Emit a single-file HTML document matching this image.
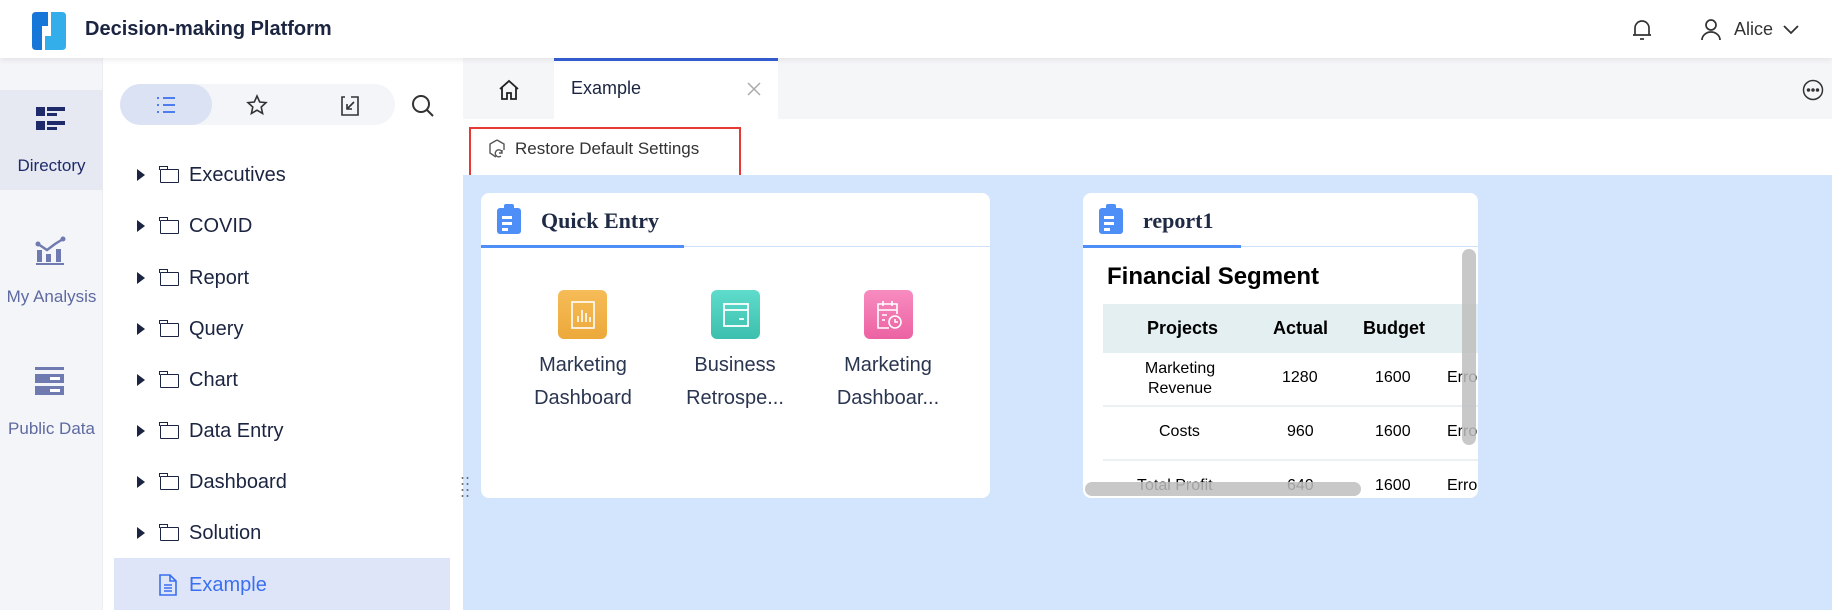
<!DOCTYPE html>
<html><head><meta charset="utf-8"><style>
*{box-sizing:border-box;margin:0;padding:0}
body{width:1832px;height:610px;overflow:hidden;font-family:"Liberation Sans",sans-serif;background:#fff;position:relative;color:#1f2a44}
.a{position:absolute}
.hdr{left:0;top:0;width:1832px;height:58px;background:#fff;box-shadow:0 2px 6px rgba(0,0,0,.08);z-index:5}
.rail{left:0;top:58px;width:103px;height:552px;background:#f4f5f9;border-right:1px solid #eceef3}
.rl{width:103px;text-align:center;font-size:17px;color:#5e6aa0}
.side{left:103px;top:58px;width:360px;height:552px;background:#fff}
.ti{left:137px;font-size:20px;color:#1b2440;height:30px;line-height:30px}
.ti .tri{position:absolute;left:0;top:9px;width:0;height:0;border-left:8px solid #1b2440;border-top:6px solid transparent;border-bottom:6px solid transparent}
.ti .fold{position:absolute;left:23px;top:9px;width:19px;height:14px;border:1.6px solid #1b2440;border-radius:1px}
.ti .fold:before{content:"";position:absolute;left:-1.6px;top:-4px;width:7px;height:3px;border:1.6px solid #1b2440;border-bottom:none}
.ti span{position:absolute;left:52px;white-space:nowrap}
.main{left:463px;top:175px;width:1369px;height:435px;background:#d3e5fc}
.card{background:#fff;border-radius:8px;overflow:hidden}
.ch{font-family:"Liberation Serif",serif;font-weight:bold;font-size:22px;color:#1f2a44}
.ic{width:49px;height:49px;border-radius:6px}
.lb{width:130px;text-align:center;font-size:20px;line-height:33px;color:#2a3550}
</style></head><body>
<div class="a hdr">
 <svg class="a" style="left:28px;top:10px" width="42" height="42" viewBox="0 0 42 42"><path d="M4 6 Q4 2 8 2 L20 2 L20 16 L14 16 L14 40 L8 40 Q4 40 4 36Z" fill="#1677d9"/><path d="M23 2 L34 2 Q38 2 38 6 L38 36 Q38 40 34 40 L17 40 L17 26 L23 26Z" fill="#33aeea"/></svg>
 <div class="a" style="left:85px;top:18px;font-size:20px;font-weight:bold;color:#1b2440">Decision-making Platform</div>
 <svg class="a" style="left:1631px;top:18px" width="22" height="24" viewBox="0 0 22 24" fill="none" stroke="#333" stroke-width="1.7"><path d="M4 17 V10 A7 7 0 0 1 18 10 V17 H2 H20"/><path d="M9 21 H13"/></svg>
 <svg class="a" style="left:1700px;top:18px" width="22" height="24" viewBox="0 0 22 24" fill="none" stroke="#333" stroke-width="1.7"><circle cx="11" cy="7" r="5"/><path d="M2 22 A9 8 0 0 1 20 22"/></svg>
 <div class="a" style="left:1734px;top:19px;font-size:18px;color:#333">Alice</div>
 <svg class="a" style="left:1782px;top:24px" width="18" height="12" viewBox="0 0 18 12" fill="none" stroke="#333" stroke-width="1.8"><path d="M2 2 L9 9 L16 2"/></svg>
</div>
<div class="a rail">
 <div class="a" style="left:0;top:32px;width:103px;height:100px;background:#e6e9f2"></div>
 <svg class="a" style="left:35px;top:47px" width="32" height="28" viewBox="0 0 32 28"><rect x="1" y="2" width="9" height="9" fill="#1f2a6a"/><rect x="12" y="2" width="18" height="4" fill="#1f2a6a"/><rect x="12" y="8" width="10" height="3" fill="#1f2a6a"/><rect x="1" y="16" width="9" height="9" fill="#1f2a6a"/><rect x="12" y="16" width="18" height="4" fill="#1f2a6a"/><rect x="12" y="22" width="10" height="3" fill="#1f2a6a"/></svg>
 <div class="a rl" style="top:98px;color:#1f2a6a">Directory</div>
 <svg class="a" style="left:35px;top:178px" width="32" height="30" viewBox="0 0 32 30"><path d="M3 8 L12 14 L20 8 L28 3" stroke="#6f7bb0" stroke-width="2.5" fill="none"/><circle cx="3" cy="8" r="2.5" fill="#6f7bb0"/><circle cx="28" cy="3" r="2.5" fill="#6f7bb0"/><rect x="2" y="14" width="5" height="12" fill="#6f7bb0"/><rect x="11" y="18" width="5" height="8" fill="#6f7bb0"/><rect x="21" y="13" width="5" height="13" fill="#6f7bb0"/><rect x="1" y="27" width="28" height="2" fill="#6f7bb0"/></svg>
 <div class="a rl" style="top:229px">My Analysis</div>
 <svg class="a" style="left:35px;top:309px" width="30" height="30" viewBox="0 0 30 30"><rect x="0" y="0" width="29" height="3" fill="#6f7bb0"/><rect x="0" y="7" width="29" height="9" fill="#6f7bb0"/><rect x="0" y="19" width="29" height="9" fill="#6f7bb0"/><rect x="15" y="10" width="10" height="3" fill="#fff"/><rect x="15" y="22" width="10" height="3" fill="#fff"/></svg>
 <div class="a rl" style="top:361px">Public Data</div>
</div>
<div class="a side">
 <div class="a" style="left:17px;top:26px;width:275px;height:41px;border-radius:21px;background:#f3f5f9"></div>
 <div class="a" style="left:17px;top:26px;width:92px;height:41px;border-radius:21px;background:#dbe2f4"></div>
 <svg class="a" style="left:53px;top:38px" width="20" height="18" viewBox="0 0 20 18" stroke="#3a6ff0" stroke-width="1.8"><path d="M1 2h2M7 2h12M1 9h2M7 9h12M1 16h2M7 16h12"/></svg>
 <svg class="a" style="left:143px;top:36px" width="22" height="22" viewBox="0 0 22 22" fill="none" stroke="#333" stroke-width="1.6"><path d="M11 2 L13.7 8 L20 8.6 L15.2 13 L16.6 19.5 L11 16.2 L5.4 19.5 L6.8 13 L2 8.6 L8.3 8Z"/></svg>
 <svg class="a" style="left:236px;top:37px" width="22" height="22" viewBox="0 0 22 22" fill="none" stroke="#333" stroke-width="1.6"><path d="M12 2 H19 V20 H3 V2 H6"/><path d="M15 7 L8 14 M8 9 V14 H13"/></svg>
 <svg class="a" style="left:308px;top:36px" width="24" height="24" viewBox="0 0 24 24" fill="none" stroke="#333" stroke-width="2"><circle cx="10" cy="10" r="8"/><path d="M16 16 L22 22"/></svg>
</div>
<div class="a ti" style="top:160px"><i class="tri"></i><i class="fold"></i><span>Executives</span></div>
<div class="a ti" style="top:211px"><i class="tri"></i><i class="fold"></i><span>COVID</span></div>
<div class="a ti" style="top:263px"><i class="tri"></i><i class="fold"></i><span>Report</span></div>
<div class="a ti" style="top:314px"><i class="tri"></i><i class="fold"></i><span>Query</span></div>
<div class="a ti" style="top:365px"><i class="tri"></i><i class="fold"></i><span>Chart</span></div>
<div class="a ti" style="top:416px"><i class="tri"></i><i class="fold"></i><span>Data Entry</span></div>
<div class="a ti" style="top:467px"><i class="tri"></i><i class="fold"></i><span>Dashboard</span></div>
<div class="a ti" style="top:518px"><i class="tri"></i><i class="fold"></i><span>Solution</span></div>
<div class="a" style="left:114px;top:558px;width:336px;height:52px;background:#dfe5f8"></div>
<svg class="a" style="left:159px;top:574px" width="18" height="22" viewBox="0 0 18 22" fill="none" stroke="#3a6ff0" stroke-width="1.6"><path d="M1 1 H11 L17 7 V21 H1Z M11 1 V7 H17 M5 11 H13 M5 14 H13 M5 17 H13"/></svg>
<div class="a" style="left:189px;top:570px;font-size:20px;color:#3a6ff0;line-height:30px">Example</div>
<div class="a" style="left:463px;top:58px;width:1369px;height:61px;background:#f5f6f8"></div>
<svg class="a" style="left:498px;top:79px" width="22" height="22" viewBox="0 0 22 22" fill="none" stroke="#222" stroke-width="1.8"><path d="M2 10 L11 2 L20 10 M4 8 V20 H9 V14 H13 V20 H18 V8"/></svg>
<div class="a" style="left:554px;top:58px;width:224px;height:61px;background:#fff;border-top:3px solid #3560d8"></div>
<div class="a" style="left:571px;top:78px;font-size:18px;color:#1b2440">Example</div>
<svg class="a" style="left:746px;top:81px" width="16" height="16" viewBox="0 0 16 16" stroke="#aaa" stroke-width="1.5"><path d="M2 2 L14 14 M14 2 L2 14"/></svg>
<svg class="a" style="left:1802px;top:79px" width="22" height="22" viewBox="0 0 22 22" fill="none" stroke="#333" stroke-width="1.5"><circle cx="11" cy="11" r="9.5"/><circle cx="6.5" cy="11" r="1" fill="#333"/><circle cx="11" cy="11" r="1" fill="#333"/><circle cx="15.5" cy="11" r="1" fill="#333"/></svg>
<div class="a" style="left:463px;top:119px;width:1369px;height:56px;background:#fff"></div>
<div class="a" style="left:469px;top:127px;width:272px;height:51px;border:2px solid #e53935"></div>
<svg class="a" style="left:488px;top:139px" width="18" height="20" viewBox="0 0 18 20" fill="none" stroke="#555" stroke-width="1.4"><path d="M9 1 L16 5 V11 M9 1 L2 5 V14 L8 18"/><path d="M14 13 A3.5 3.5 0 1 0 13 17 M14 11 V14 H11"/></svg>
<div class="a" style="left:515px;top:139px;font-size:17px;color:#333">Restore Default Settings</div>
<div class="a main"></div>
<svg class="a" style="left:461px;top:476px" width="8" height="22" viewBox="0 0 8 22" fill="#666"><circle cx="1.5" cy="2" r="1"/><circle cx="6.5" cy="2" r="1"/><circle cx="1.5" cy="8" r="1"/><circle cx="6.5" cy="8" r="1"/><circle cx="1.5" cy="14" r="1"/><circle cx="6.5" cy="14" r="1"/><circle cx="1.5" cy="20" r="1"/><circle cx="6.5" cy="20" r="1"/></svg>
<div class="a card" style="left:481px;top:193px;width:509px;height:305px">
 <svg class="a" style="left:16px;top:11px" width="24" height="30" viewBox="0 0 24 30"><rect x="0" y="4" width="24" height="26" rx="3" fill="#4e8ef7"/><rect x="7" y="0" width="10" height="7" rx="2" fill="#4e8ef7"/><rect x="5" y="12" width="10" height="3" fill="#fff"/><rect x="5" y="18" width="10" height="3" fill="#fff"/><rect x="5" y="24" width="6" height="3" fill="#fff"/></svg>
 <div class="a ch" style="left:60px;top:15px">Quick Entry</div>
 <div class="a" style="left:0;top:53px;width:509px;height:1px;background:#cfe0fa"></div>
 <div class="a" style="left:0;top:52px;width:203px;height:3px;background:#4e8ef7"></div>
 <div class="a ic" style="left:77px;top:97px;background:linear-gradient(#f6bc58,#eca93a)"></div>
 <svg class="a" style="left:89px;top:107px" width="26" height="30" viewBox="0 0 26 30" fill="none" stroke="#fff" stroke-width="1.6"><rect x="2" y="2" width="22" height="26"/><path d="M8 22 V16 M12 22 V10 M16 22 V13 M20 22 V17"/></svg>
 <div class="a ic" style="left:230px;top:97px;background:linear-gradient(#5fdccb,#3cbfae)"></div>
 <svg class="a" style="left:241px;top:109px" width="28" height="26" viewBox="0 0 28 26" fill="none" stroke="#fff" stroke-width="1.8"><rect x="2" y="2" width="24" height="22"/><path d="M2 8 H26 M17 17 H22"/></svg>
 <div class="a ic" style="left:383px;top:97px;background:linear-gradient(#f78cc0,#ec62a2)"></div>
 <svg class="a" style="left:394px;top:105px" width="28" height="34" viewBox="0 0 28 34" fill="none" stroke="#fff" stroke-width="1.6"><path d="M14 30 H3 V6 H22 V16 M3 12 H22 M8 3 V8 M17 3 V8 M7 17 H12 M7 22 H10"/><circle cx="20" cy="24" r="6"/><path d="M20 21 V24 H23"/></svg>
 <div class="a lb" style="left:37px;top:156px">Marketing<br>Dashboard</div>
 <div class="a lb" style="left:189px;top:156px">Business<br>Retrospe...</div>
 <div class="a lb" style="left:342px;top:156px">Marketing<br>Dashboar...</div>
</div>
<div class="a card" style="left:1083px;top:193px;width:395px;height:305px">
 <svg class="a" style="left:16px;top:11px" width="24" height="30" viewBox="0 0 24 30"><rect x="0" y="4" width="24" height="26" rx="3" fill="#4e8ef7"/><rect x="7" y="0" width="10" height="7" rx="2" fill="#4e8ef7"/><rect x="5" y="12" width="10" height="3" fill="#fff"/><rect x="5" y="18" width="10" height="3" fill="#fff"/><rect x="5" y="24" width="6" height="3" fill="#fff"/></svg>
 <div class="a ch" style="left:60px;top:15px">report1</div>
 <div class="a" style="left:0;top:53px;width:395px;height:1px;background:#cfe0fa"></div>
 <div class="a" style="left:0;top:52px;width:158px;height:3px;background:#4e8ef7"></div>
 <div class="a" style="left:24px;top:70px;font-size:24px;font-weight:bold;color:#000">Financial Segment</div>
 <div class="a" style="left:20px;top:111px;width:375px;height:49px;background:#e4eff2"></div>
 <div class="a" style="left:20px;top:212px;width:375px;height:2px;background:#ebf1f3"></div>
 <div class="a" style="left:20px;top:266px;width:375px;height:2px;background:#ebf1f3"></div>
 <div class="a" style="left:64px;top:125px;font-size:18px;font-weight:bold;color:#000">Projects</div>
 <div class="a" style="left:190px;top:125px;font-size:18px;font-weight:bold;color:#000">Actual</div>
 <div class="a" style="left:280px;top:125px;font-size:18px;font-weight:bold;color:#000">Budget</div>
 <div class="a" style="left:57px;top:166px;width:80px;text-align:center;font-size:16px;line-height:20px;color:#000">Marketing Revenue</div>
 <div class="a" style="left:199px;top:176px;font-size:16px;color:#000">1280</div><div class="a" style="left:292px;top:176px;font-size:16px;color:#000">1600</div><div class="a" style="left:364px;top:176px;font-size:16px;color:#000">Erro</div>
 <div class="a" style="left:76px;top:230px;font-size:16px;color:#000">Costs</div>
 <div class="a" style="left:204px;top:230px;font-size:16px;color:#000">960</div><div class="a" style="left:292px;top:230px;font-size:16px;color:#000">1600</div><div class="a" style="left:364px;top:230px;font-size:16px;color:#000">Erro</div>
 <div class="a" style="left:54px;top:284px;font-size:16px;color:#000">Total Profit</div>
 <div class="a" style="left:204px;top:284px;font-size:16px;color:#000">640</div><div class="a" style="left:292px;top:284px;font-size:16px;color:#000">1600</div><div class="a" style="left:364px;top:284px;font-size:16px;color:#000">Erro</div>
 <div class="a" style="left:379px;top:56px;width:14px;height:196px;border-radius:7px;background:rgba(190,190,190,.85)"></div>
 <div class="a" style="left:2px;top:289px;width:276px;height:14px;border-radius:7px;background:rgba(190,190,190,.85)"></div>
</div>
</body></html>
